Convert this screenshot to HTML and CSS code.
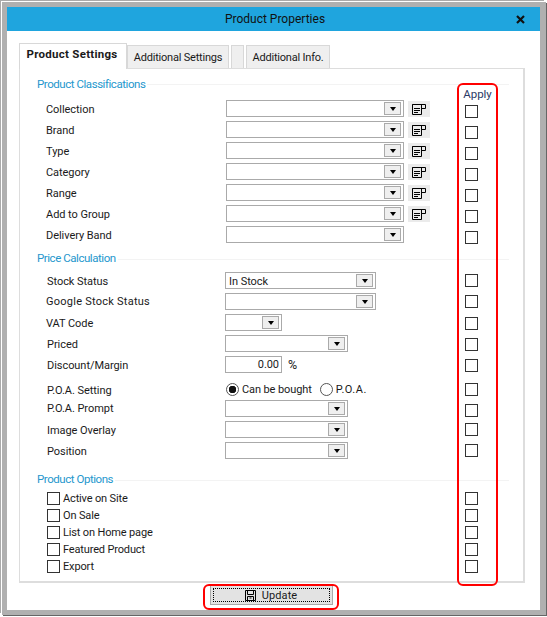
FILE: index.html
```html
<!DOCTYPE html>
<html lang="en">
<head>
<meta charset="utf-8">
<title>Product Properties</title>
<link rel="stylesheet" href="styles.css">
</head>
<body>
<svg class="defs" width="0" height="0" aria-hidden="true">
  <symbol id="details" viewBox="0 0 14 11">
    <path d="M.5.5H13.5V4.5H9.5M.5.5H9.5V10.5H.5ZM2 4.5H8M2 6.5H8M2 8.5H6" fill="none" stroke="#000" stroke-width="1"/>
  </symbol>
</svg>
<div class="window">
  <header class="titlebar">
    <span class="title">Product Properties</span>
    <svg class="close" viewBox="0 0 9 9" width="9" height="9"><path d="M1 1L8 8M8 1L1 8" stroke="#111" stroke-width="2.2" fill="none"/></svg>
  </header>
  <main class="content">
    <nav class="tabs">
      <div class="tab tab-active">Product Settings</div>
      <div class="tab tab-a">Additional Settings</div>
      <div class="tab tab-blank"></div>
      <div class="tab tab-b">Additional Info.</div>
    </nav>
    <section class="panel">
      <div class="legend"><span>Product Classifications</span></div>
      <div class="row row-class"><label>Collection</label><div class="ctl"><div class="combo w178"><span class="val"></span><i class="btn"></i></div><span class="lookup"><svg width="14" height="11"><use href="#details"/></svg></span></div><input class="chk apply" type="checkbox"></div>
      <div class="row row-class"><label>Brand</label><div class="ctl"><div class="combo w178"><span class="val"></span><i class="btn"></i></div><span class="lookup"><svg width="14" height="11"><use href="#details"/></svg></span></div><input class="chk apply" type="checkbox"></div>
      <div class="row row-class"><label>Type</label><div class="ctl"><div class="combo w178"><span class="val"></span><i class="btn"></i></div><span class="lookup"><svg width="14" height="11"><use href="#details"/></svg></span></div><input class="chk apply" type="checkbox"></div>
      <div class="row row-class"><label>Category</label><div class="ctl"><div class="combo w178"><span class="val"></span><i class="btn"></i></div><span class="lookup"><svg width="14" height="11"><use href="#details"/></svg></span></div><input class="chk apply" type="checkbox"></div>
      <div class="row row-class"><label>Range</label><div class="ctl"><div class="combo w178"><span class="val"></span><i class="btn"></i></div><span class="lookup"><svg width="14" height="11"><use href="#details"/></svg></span></div><input class="chk apply" type="checkbox"></div>
      <div class="row row-class"><label>Add to Group</label><div class="ctl"><div class="combo w178"><span class="val"></span><i class="btn"></i></div><span class="lookup"><svg width="14" height="11"><use href="#details"/></svg></span></div><input class="chk apply" type="checkbox"></div>
      <div class="row row-class"><label>Delivery Band</label><div class="ctl"><div class="combo w178"><span class="val"></span><i class="btn"></i></div></div><input class="chk apply" type="checkbox"></div>

      <div class="legend legend-price"><span>Price Calculation</span></div>
      <div class="row"><label>Stock Status</label><div class="ctl"><div class="combo w151"><span class="val">In Stock</span><i class="btn"></i></div></div><input class="chk apply a2" type="checkbox"></div>
      <div class="row"><label class="tight up spaced">Google Stock Status</label><div class="ctl"><div class="combo w151"><span class="val"></span><i class="btn"></i></div></div><input class="chk apply a2" type="checkbox"></div>
      <div class="row"><label class="tight">VAT Code</label><div class="ctl"><div class="combo w57"><span class="val"></span><i class="btn"></i></div></div><input class="chk apply a3" type="checkbox"></div>
      <div class="row"><label>Priced</label><div class="ctl"><div class="combo w123"><span class="val"></span><i class="btn"></i></div></div><input class="chk apply a3" type="checkbox"></div>
      <div class="row"><label>Discount/Margin</label><div class="ctl"><div class="combo w57 number">0.00</div><span class="pct">%</span></div><input class="chk apply a3" type="checkbox"></div>
      <div class="row row-poa"><label class="poa-label">P.O.A. Setting</label><div class="ctl radios"><input class="rad" type="radio" name="poa" checked><span class="rad-text">Can be bought</span><input class="rad" type="radio" name="poa"><span class="rad-text">P.O.A.</span></div><input class="chk apply a2" type="checkbox"></div>
      <div class="row"><label class="up">P.O.A. Prompt</label><div class="ctl"><div class="combo w123"><span class="val"></span><i class="btn"></i></div></div><input class="chk apply a4" type="checkbox"></div>
      <div class="row"><label>Image Overlay</label><div class="ctl"><div class="combo w123"><span class="val"></span><i class="btn"></i></div></div><input class="chk apply a2" type="checkbox"></div>
      <div class="row"><label>Position</label><div class="ctl"><div class="combo w123"><span class="val"></span><i class="btn"></i></div></div><input class="chk apply a2" type="checkbox"></div>

      <div class="legend legend-opt"><span>Product Options</span></div>
      <div class="row row-opt"><div class="opt"><input class="chk" type="checkbox"><span>Active on Site</span></div><input class="chk" type="checkbox"></div>
      <div class="row row-opt"><div class="opt"><input class="chk" type="checkbox"><span>On Sale</span></div><input class="chk" type="checkbox"></div>
      <div class="row row-opt"><div class="opt"><input class="chk" type="checkbox"><span>List on Home page</span></div><input class="chk" type="checkbox"></div>
      <div class="row row-opt"><div class="opt"><input class="chk" type="checkbox"><span>Featured Product</span></div><input class="chk" type="checkbox"></div>
      <div class="row row-opt"><div class="opt"><input class="chk" type="checkbox"><span>Export</span></div><input class="chk" type="checkbox"></div>

      <div class="mark-apply"><span>Apply</span></div>
    </section>
    <footer class="footer">
      <button class="update" type="button"><span class="focus">
        <svg width="11" height="11" viewBox="0 0 11 11"><path d="M.5.5H10.5V10.5H.5ZM2.5.5V4.5H8.5V.5M2.5 10.5V6.5H8.5V10.5M4.5 8H6.5" fill="none" stroke="#000"/></svg>
        <span class="update-text">Update</span></span></button>
      <div class="mark-update"></div>
    </footer>
  </main>
</div>
</body>
</html>
```

FILE: styles.css
```css
* { box-sizing: border-box; }
html, body { margin: 0; padding: 0; background: #fff; }
body {
  width: 547px;
  height: 617px;
  overflow: hidden;
  font-family: Roboto, sans-serif;
  font-size: 11px;
  letter-spacing: -.05px;
  color: #1a1a1a;
}
.defs { position: absolute; }
.window {
  width: 544px;
  height: 613px;
  margin: 2px 0 0 2px;
  border: solid #b0b0b0;
  border-width: 5px 6px 5px 5px;
  box-shadow: -1px -1px 0 #fff, -2px -2px 0 #aaa, 1px 1px 0 #666;
  background: #fff;
  display: flex;
  flex-direction: column;
}
.titlebar {
  height: 24px;
  flex: none;
  background: #1fa5de;
  display: flex;
  align-items: center;
  justify-content: center;
  position: relative;
}
.title { font-size: 12px; letter-spacing: 0; color: #111; margin-left: 3px; }
.close { position: absolute; right: 15px; top: 8px; }

.content { padding: 12px 15px 0 12px; position: relative; }

.tabs { display: flex; align-items: flex-end; height: 26px; margin-bottom: -1px; position: relative; }
.tab {
  height: 24px;
  background: #efefef;
  border: 1px solid #d8d8d8;
  border-bottom: 0;
  line-height: 24px;
  text-align: center;
  letter-spacing: -.2px;
}
.tab-active {
  width: 108px;
  height: 26px;
  padding-right: 2px;
  background: #fff;
  font-weight: 700;
  font-size: 11.5px;
  letter-spacing: .28px;
  position: relative;
  z-index: 1;
  line-height: 21px;
}
.tab-a { width: 102px; }
.tab-blank { width: 13px; margin-left: 2px; }
.tab-b { width: 84px; margin-left: 2px; }

.panel {
  width: 506px;
  height: 515px;
  border: solid #ddd;
  border-width: 1px 2px 2px 1px;
  padding: 8px 14px 4px 17px;
  position: relative;
}
.legend {
  display: flex;
  align-items: center;
  height: 14px;
  margin-bottom: 9px;
  color: #2597cd;
  font-size: 11.5px;
  letter-spacing: -.45px;
}
.legend::after {
  content: "";
  flex: 1;
  height: 1px;
  background: #f3f3f3;
  margin-left: 2px;
}
.legend-price { margin-top: 5px; margin-bottom: 6px; }
.legend-opt { margin-top: 10px; margin-bottom: 5px; }
.legend-price span, .legend-opt span { margin-top: -2px; }

.row {
  display: grid;
  grid-template-columns: 188px 240px 13px;
  height: 21px;
  align-items: start;
}
.row-class { grid-template-columns: 189px 239px 13px; }
.row > label { padding-left: 10px; line-height: 20px; }
.row-class > label { padding-left: 9px; }
.row > label.tight { padding-left: 9px; }
.row > label.up { line-height: 18px; }
.row > label.spaced { letter-spacing: .25px; }
.row-poa { height: 19px; margin-top: 4px; }
.row-opt { grid-template-columns: 428px 13px; height: 17px; }

.ctl { display: flex; align-items: flex-start; }
.combo {
  height: 17px;
  border: 1px solid #aaa;
  display: flex;
  align-items: center;
  justify-content: space-between;
  padding: 0 2px 0 3px;
  background: #fff;
}
.w178 { width: 178px; }
.w151 { width: 151px; }
.w123 { width: 123px; }
.w57 { width: 57px; }
.val { line-height: 16px; padding-top: 2px; }
.number { justify-content: flex-end; padding-right: 2px; line-height: 15px; }
.btn {
  width: 17px;
  height: 13px;
  border: 1px solid #aaa;
  background: #efefef;
  display: flex;
  align-items: center;
  justify-content: center;
}
.btn::before {
  content: "";
  border: solid transparent;
  border-width: 4px 3.5px 0;
  border-top-color: #000;
}
.lookup {
  width: 22px;
  height: 16px;
  margin: 1px 0 0 4px;
  padding-top: 1px;
  background: #ebebeb;
  display: flex;
  align-items: center;
  justify-content: center;
}
.pct { margin-left: 6px; line-height: 18px; font-size: 12.5px; }

.chk, .rad {
  appearance: none;
  -webkit-appearance: none;
  width: 13px;
  height: 13px;
  margin: 0;
  border: 1px solid #333;
  background: #fff;
  flex: none;
}
.apply { margin-top: 5px; }
.apply.a2 { margin-top: 2px; }
.apply.a3 { margin-top: 3px; }
.apply.a4 { margin-top: 4px; }

.radios { align-items: center; padding-left: 1px; height: 17px; }
.rad { border-radius: 50%; border-color: #555; }
.rad:checked { background: radial-gradient(circle, #111 0 3.5px, #fff 4px); }
.rad-text { margin: 0 8px 0 3px; letter-spacing: -.1px; }
.rad-text:last-child { letter-spacing: .5px; }

.opt { display: flex; align-items: center; gap: 3px; padding-left: 10px; height: 13px; letter-spacing: -.15px; line-height: 11px; }

.mark-apply {
  position: absolute;
  left: 437px;
  top: 14px;
  width: 41px;
  height: 503px;
  border: 2px solid #f00;
  border-radius: 6px;
  text-align: center;
  color: #2a3a66;
  line-height: 16px;
  padding-top: 1px;
  font-size: 11.5px;
}
.footer { display: flex; justify-content: center; padding: 2px 0 0 0; position: relative; }
.update {
  width: 123px;
  height: 20px;
  padding: 2px;
  margin-left: -2px;
  background: #e3e3e3;
  border: 1px solid #aaa;
  font: inherit;
  color: inherit;
  letter-spacing: inherit;
  display: block;
}
.focus {
  border: 1px dotted #000;
  height: 100%;
  display: flex;
  align-items: center;
  justify-content: center;
  gap: 6px;
}
.update-text { letter-spacing: .1px; }
.mark-update {
  position: absolute;
  left: 184px;
  top: 1px;
  width: 136px;
  height: 26px;
  border: 2px solid #f00;
  border-radius: 6px;
}
```
